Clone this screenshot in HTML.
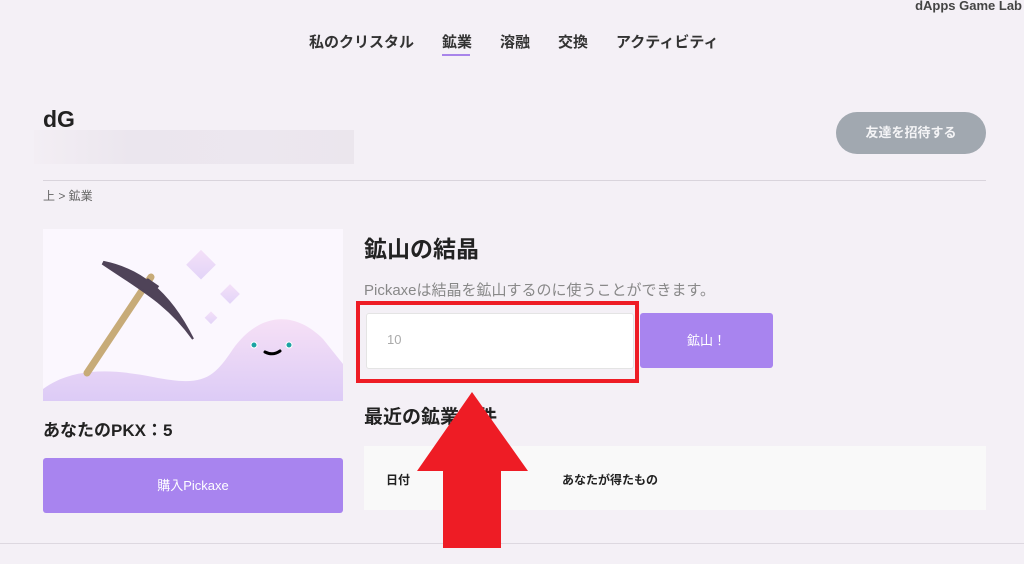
<!DOCTYPE html>
<html><head><meta charset="utf-8"><style>
body{margin:0;width:1024px;height:564px;overflow:hidden;background:#f4f0f6;font-family:"Liberation Sans","Noto Sans CJK JP",sans-serif;color:#333;position:relative}
.a{position:absolute}
.nav span{position:absolute;top:31px;font-size:15px;font-weight:bold;color:#333}
</style></head><body>
<div class="a" style="right:2px;top:-2px;font-size:13px;font-weight:bold;color:#444">dApps Game Lab</div>
<div class="nav">
<span style="left:309px">私のクリスタル</span>
<span style="left:442px">鉱業</span>
<span style="left:500px">溶融</span>
<span style="left:558px">交換</span>
<span style="left:616px">アクティビティ</span>
</div>
<div class="a" style="left:442px;top:54px;width:28px;height:2px;background:#a884ea"></div>
<div class="a" style="left:43px;top:106px;font-size:23px;font-weight:bold;color:#222">dG</div>
<div class="a" style="left:34px;top:130px;width:320px;height:34px;background:linear-gradient(90deg,#f3eef4,#ebe6ee 30%,#ece7ef 70%,#ebe6ed)"></div>
<div class="a" style="left:836px;top:112px;width:150px;height:42px;border-radius:21px;background:#a1a8b0;color:#f4f4f6;font-size:13px;font-weight:bold;text-align:center;line-height:42px">友達を招待する</div>
<div class="a" style="left:43px;top:180px;width:943px;height:1px;background:#d9d4dc"></div>
<div class="a" style="left:43px;top:187px;font-size:12px;color:#666">上 &gt; 鉱業</div>
<svg class="a" style="left:43px;top:229px" width="300" height="172" viewBox="0 0 300 172">
<defs><linearGradient id="g" x1="0" y1="0" x2="0" y2="1"><stop offset="0" stop-color="#f6e0f6"/><stop offset="1" stop-color="#dccbf6"/></linearGradient>
<linearGradient id="d" x1="0" y1="0" x2="1" y2="1"><stop offset="0" stop-color="#f4e0f8"/><stop offset="1" stop-color="#e2d4f8"/></linearGradient></defs>
<rect width="300" height="172" fill="#fbf7fe"/>
<path d="M0 172 L0 160 C30 138 70 140 110 148 C160 158 170 150 190 120 C215 85 250 80 280 110 L300 135 L300 172Z" fill="url(#g)"/>
<rect x="148" y="25" width="21" height="21" transform="rotate(45 158 35)" fill="url(#d)"/>
<rect x="180" y="58" width="14" height="14" transform="rotate(45 187 65)" fill="url(#d)"/>
<rect x="164" y="84" width="9" height="9" transform="rotate(45 168 88)" fill="url(#d)"/>
<line x1="44" y1="144" x2="108" y2="48" stroke="#c7ab78" stroke-width="7" stroke-linecap="round"/>
<path d="M61 33 C95 40 125 60 150 110 C125 75 100 62 60 35Z" fill="#4f4358" stroke="#4f4358" stroke-width="2"/>
<rect x="100" y="52" width="14" height="12" transform="rotate(35 107 58)" fill="#4f4358"/>
<circle cx="211" cy="116" r="3" fill="#1aa3a3" stroke="#fff"/><circle cx="246" cy="116" r="3" fill="#1aa3a3" stroke="#fff"/>
<path d="M222 123 Q230 127 237 122" stroke="#000" stroke-width="3" fill="none" stroke-linecap="round"/>
</svg>
<div class="a" style="left:43px;top:416px;font-size:17px;font-weight:bold;color:#222">あなたのPKX：5</div>
<div class="a" style="left:43px;top:458px;width:300px;height:55px;background:#a884ef;border-radius:3px;color:#fff;font-size:13px;text-align:center;line-height:55px">購入Pickaxe</div>
<div class="a" style="left:364px;top:230px;font-size:23px;font-weight:bold;color:#222">鉱山の結晶</div>
<div class="a" style="left:364px;top:279px;font-size:15px;color:#888">Pickaxeは結晶を鉱山するのに使うことができます。</div>
<div class="a" style="left:366px;top:313px;width:266px;height:54px;background:#fff;border:1px solid #e4e4e4;border-radius:3px"></div>
<div class="a" style="left:387px;top:332px;font-size:13px;color:#aaa">10</div>
<div class="a" style="left:356px;top:301px;width:275px;height:74px;border:4px solid #ee1c25"></div>
<div class="a" style="left:640px;top:313px;width:133px;height:55px;background:#a884ef;border-radius:3px;color:#fff;font-size:13px;text-align:center;line-height:55px">鉱山！</div>
<div class="a" style="left:364px;top:402px;font-size:19px;font-weight:bold;color:#222">最近の鉱業条件</div>
<div class="a" style="left:364px;top:446px;width:622px;height:64px;background:#f9f9f9"></div>
<div class="a" style="left:386px;top:471px;font-size:12px;font-weight:bold;color:#222">日付</div>
<div class="a" style="left:562px;top:471px;font-size:12px;font-weight:bold;color:#222">あなたが得たもの</div>
<div class="a" style="left:0;top:543px;width:1024px;height:1px;background:#ddd8e0"></div>
<svg class="a" style="left:416px;top:390px" width="114" height="160"><path d="M56 2 L112 81 L85 81 L85 158 L27 158 L27 81 L1 81Z" fill="#ee1c25"/></svg>
</body></html>
